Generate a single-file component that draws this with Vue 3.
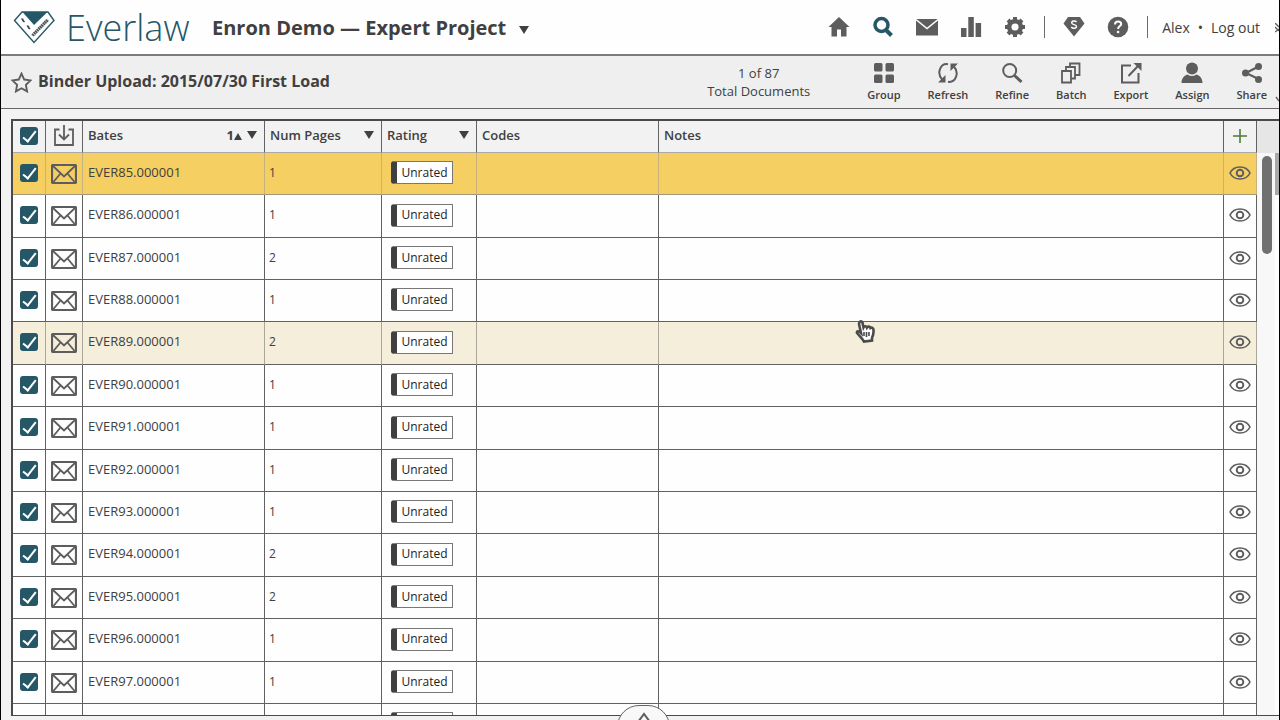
<script setup>
import { ref } from 'vue'

const tools = ['Group', 'Refresh', 'Refine', 'Batch', 'Export', 'Assign', 'Share']
const pages = [1, 1, 2, 1, 2, 1, 1, 1, 1, 2, 2, 1, 1, 1]
const rows = ref(pages.map((count, i) => ({
  bates: `EVER${85 + i}.000001`,
  pages: count,
  checked: true,
  state: i === 0 ? 'current' : i === 4 ? 'hovered' : ''
})))
const allChecked = ref(true)
</script>

<template>
  <div class="app">
    <header class="top">
      <a href="#" class="brand" aria-label="Everlaw home">
        <svg class="logo" viewBox="0 0 42 34" aria-hidden="true">
          <path d="M9 2h26l6 8.500L21 32.500 1.500 10.500z" fill="#fff" stroke="#265767" stroke-width="1.400" />
          <path d="M9.500 2h25L21 15z" fill="#265767" />
          <path d="M8.500 9.500c2-1.500 1 3 3 1.500M14 16.500c2-1.500 1 3 3 1.500" stroke="#3c4448" stroke-width="1.800" fill="none" />
          <path d="M19.500 25.500L35 9.500" stroke="#4b5458" stroke-width="3.200" stroke-dasharray="1.700 .5" fill="none" />
        </svg>
        <span class="wordmark">Everlaw</span>
      </a>
      <button class="project">Enron Demo — Expert Project <span class="caret"></span></button>
      <nav class="nav">
        <a href="#" aria-label="Home"><svg viewBox="0 0 22 22"><path d="M11 1L.5 11H3.500v9.500h5.500v-7h4v7h5.500V11h3z" /></svg></a>
        <a href="#" aria-label="Search" class="active"><svg viewBox="0 0 22 22"><circle cx="9.500" cy="9" r="6.500" fill="none" stroke="currentColor" stroke-width="3.500" /><path d="M14 14l5.500 5.500" stroke="currentColor" stroke-width="4" /></svg></a>
        <a href="#" aria-label="Messages"><svg viewBox="0 0 22 22"><path d="M0 3h22v16.500H0z" /><path d="M0 3.500l11 9 11-9" fill="none" stroke="#fff" stroke-width="1.500" /></svg></a>
        <a href="#" aria-label="Analytics"><svg viewBox="0 0 22 22"><path d="M1 12h5.500v9H1zM8.300 1h5.500v20H8.300zM15.600 7h5.500v14h-5.500z" /></svg></a>
        <a href="#" aria-label="Settings"><svg viewBox="0 0 22 22"><circle cx="11" cy="11" r="5.800" fill="none" stroke="currentColor" stroke-width="4.500" /><path d="M11 1v4M11 17v4M1 11h4M17 11h4M4 4l3 3M15 15l3 3M18 4l-3 3M7 15l-3 3" stroke="currentColor" stroke-width="4" /></svg></a>
        <span class="rule"></span>
        <a href="#" aria-label="Storybuilder"><svg viewBox="0 0 22 22"><path d="M5 1h12l4.500 6.500L11 20.500.5 7.500z" /><path d="M13.500 6C12.500 4.500 8.500 4.500 8.700 7c.2 2 4.800 1.300 4.800 3.500 0 2.300-4 2.300-5.200.5" fill="none" stroke="#fff" stroke-width="1.400" /></svg></a>
        <a href="#" aria-label="Help"><svg viewBox="0 0 22 22"><circle cx="11" cy="11" r="10.300" /><path d="M8 8.500C8 4.500 14.300 4.800 14.200 8c0 2-3.100 2.300-3.100 5" fill="none" stroke="#fff" stroke-width="2" /><circle cx="11.100" cy="16" r="1.300" fill="#fff" /></svg></a>
        <span class="rule"></span>
      </nav>
      <div class="user"><a href="#">Alex</a><span>•</span><a href="#">Log out</a></div>
      <svg class="sliver" viewBox="0 0 4 10" aria-hidden="true"><path d="M0 0l4 4M0 4l4 4M0 9l4-3" fill="none" stroke="#5d5d5d" stroke-width="1.300" /></svg>
    </header>

    <section class="toolbar">
      <button class="star" aria-label="Favorite"><svg viewBox="0 0 20 20"><path d="M10 1.500l2.600 5.700 6 .8-4.400 4.300 1.100 6.200L10 15.500l-5.300 3 1.100-6.200L1.400 8l6-.8z" fill="none" stroke="currentColor" stroke-width="1.800" /></svg></button>
      <h1>Binder Upload: 2015/07/30 First Load</h1>
      <p class="count">1 of 87<br>Total Documents</p>
      <div class="tools">
        <button v-for="tool in tools" :key="tool">
          <svg viewBox="0 0 22 22" aria-hidden="true">
            <g v-if="tool === 'Group'"><rect x="1" y="1" width="8.500" height="8.500" rx="1.500" /><rect x="12.500" y="1" width="8.500" height="8.500" rx="1.500" /><rect x="1" y="12.500" width="8.500" height="8.500" rx="1.500" /><rect x="12.500" y="12.500" width="8.500" height="8.500" rx="1.500" /></g>
            <g v-else-if="tool === 'Refresh'"><path d="M11 2.200C3.500 1 -1 11 5.500 18M11 19.800C18.500 21 23 11 16.500 4" fill="none" stroke="currentColor" stroke-width="2" /><path d="M1 20.500h7.500V13zM21 1.500h-7.500V9z" /></g>
            <g v-else-if="tool === 'Refine'"><circle cx="8.700" cy="8.500" r="6.500" fill="none" stroke="currentColor" stroke-width="2" /><path d="M13.500 13.500l7 6.500" stroke="currentColor" stroke-width="3" /></g>
            <g v-else-if="tool === 'Batch'" fill="none" stroke="currentColor" stroke-width="1.800"><path d="M2 9h9v11.500H2zM6 9V5h9v11.500h-4M10 5V1.500h9.500V13H15" /></g>
            <g v-else-if="tool === 'Export'" fill="none" stroke="currentColor" stroke-width="2"><path d="M11 3.500H2v17h16.500V11M8.500 14L18.500 3.500" /><path d="M13.500 1H21.500v8z" fill="currentColor" stroke="none" /></g>
            <g v-else-if="tool === 'Assign'"><circle cx="11" cy="6.500" r="6" /><path d="M.5 21c0-5 3-7.500 6-8.500 3 2 6 2 9 0 3 1 6 3.500 6 8.500z" /></g>
            <g v-else><path d="M17.500 4.500L5 11l12.500 6" fill="none" stroke="currentColor" stroke-width="2.200" /><circle cx="17.500" cy="4.500" r="3.500" /><circle cx="4.500" cy="11" r="3.500" /><circle cx="17.500" cy="17.500" r="3.500" /></g>
          </svg>
          <span>{{ tool }}</span>
        </button>
      </div>
      <svg class="sliver low" viewBox="0 0 4 10" aria-hidden="true"><path d="M1 5l3 4" fill="none" stroke="#5d5d5d" stroke-width="1.300" /></svg>
    </section>

    <main class="content">
      <div class="grid">
        <table>
          <colgroup>
            <col class="c-check"><col class="c-type"><col class="c-bates"><col class="c-pages"><col class="c-rating"><col class="c-codes"><col><col class="c-view">
          </colgroup>
          <thead>
            <tr>
              <th class="icon-cell"><input v-model="allChecked" type="checkbox" aria-label="Select all"></th>
              <th class="icon-cell"><svg class="download" viewBox="0 0 22 22"><path d="M6.500 4.500H2v15.500h18V4.500h-4.500M11 0v14M6 9.500l5 5 5-5" fill="none" stroke="currentColor" stroke-width="1.800" /></svg></th>
              <th><div class="head">Bates <button class="order" aria-label="Sort order">1<i class="up"></i></button><button class="menu" aria-label="Bates menu"><i class="caret"></i></button></div></th>
              <th><div class="head">Num Pages <button class="menu" aria-label="Num Pages menu"><i class="caret"></i></button></div></th>
              <th><div class="head">Rating <button class="menu" aria-label="Rating menu"><i class="caret"></i></button></div></th>
              <th>Codes</th>
              <th>Notes</th>
              <th class="icon-cell"><button class="add" aria-label="Add column"><svg viewBox="0 0 14 14"><path d="M7 0v14M0 7h14" stroke="#4d7a35" stroke-width="1.600" /></svg></button></th>
            </tr>
          </thead>
          <tbody>
            <tr v-for="row in rows" :key="row.bates" :class="row.state">
              <td class="icon-cell raised"><input v-model="row.checked" type="checkbox" :aria-label="`Select ${row.bates}`"></td>
              <td class="icon-cell"><svg class="mail" viewBox="0 0 26 20"><rect x="1" y="1" width="24" height="18" rx="1" fill="none" stroke="currentColor" stroke-width="2.200" /><path d="M2 2l11 10.500L24 2M2 18.500l7.500-9M24 18.500l-7.500-9" fill="none" stroke="currentColor" stroke-width="1.800" /></svg></td>
              <td class="bates">{{ row.bates }}</td>
              <td class="pages">{{ row.pages }}</td>
              <td><button class="rating">Unrated</button></td>
              <td></td>
              <td></td>
              <td class="icon-cell raised"><button class="view" :aria-label="`View ${row.bates}`"><svg viewBox="0 0 22 14"><path d="M1 7c4-8 16-8 20 0-4 8-16 8-20 0z" fill="none" stroke="currentColor" stroke-width="1.600" /><circle cx="11" cy="7" r="3.300" fill="none" stroke="currentColor" stroke-width="1.900" /></svg></button></td>
            </tr>
          </tbody>
        </table>
      </div>
      <div class="gutter"><div class="thumb"></div></div>
      <div class="edge"></div>
      <button class="pull" aria-label="Open panel"><svg viewBox="0 0 14 12"><path d="M1 11l6-8 6 8" fill="none" stroke="currentColor" stroke-width="2" /></svg></button>
      <svg class="pointer" viewBox="0 0 20 24" aria-hidden="true"><path d="M4.500 2c2-1.500 3 0 3 1l1 4.500c1-2 3-1.500 3.500 0 1-1.500 3-1 3.500.5 1.500-1 3 .5 3 2 .3 4-.5 6-1.500 8v2.500l-8 1C7 18 4 15.500 2 13c-.5-2 1.500-2.500 4 0L4 4z" fill="#fff" stroke="#4b4b4b" stroke-width="2.600" /><path d="M9 12v4M11.500 12v5M14 12v4" stroke="#4b4b4b" stroke-width="1.600" /></svg>
    </main>
  </div>
</template>

<style>
html, body { margin: 0; background: #f2f2f2; }
</style>

<style scoped>
.app { box-sizing: border-box; height: 100vh; display: flex; flex-direction: column; overflow: hidden; border: solid #000; border-width: 0 1px; background: #f2f2f2; color: #404040; font-family: "Open Sans", "Noto Sans", sans-serif; font-size: 12px; }
button { padding: 0; border: 0; background: none; color: inherit; font: inherit; }
a { color: inherit; text-decoration: none; }
svg { display: block; fill: currentColor; }
.caret { display: inline-block; border: 5px solid transparent; border-top: 8px solid #404040; border-bottom: 0; }

.top { position: relative; flex: none; height: 54px; display: flex; align-items: center; background: #fefefe; border-bottom: 2px solid #7c7c7c; padding: 0 18px 0 12px; }
.brand { display: flex; align-items: center; gap: 11px; color: #265767; width: 199px; }
.logo { width: 42px; height: 34px; }
.wordmark { padding-top: 2px; font-size: 36px; font-weight: 300; line-height: 48px; }
.project { font-size: 20px; font-weight: 700; white-space: nowrap; }
.project .caret { margin-left: 8px; vertical-align: 1px; }
.nav { margin-left: auto; display: flex; align-items: center; gap: 22px; color: #5d5d5d; }
.nav svg { width: 22px; height: 22px; }
.nav .active { color: #265767; }
.rule { width: 1px; height: 22px; margin: 0 -4px; background: #6b6b6b; }
.user { display: flex; gap: 8px; margin-left: 18px; padding-right: 1px; font-size: 14px; white-space: nowrap; }
.sliver { position: absolute; right: 0; top: 23px; width: 4px; height: 10px; }
.low { top: 36px; }

.toolbar { position: relative; flex: none; height: 52px; display: flex; align-items: center; background: #efefef; border-bottom: 1px solid #666; padding: 0 12px 0 10px; }
.star { width: 21px; color: #5d5d5d; }
.star svg { width: 21px; height: 21px; }
h1 { margin: 0 0 2px 6px; font-size: 16px; font-weight: 700; white-space: nowrap; }
.count { margin: 0 57px 0 auto; text-align: center; font-size: 13px; line-height: 18px; }
.tools { display: flex; gap: 27px; }
.tools button { display: flex; flex-direction: column; align-items: center; gap: 3px; font-size: 11px; line-height: 16px; font-weight: 600; }
.tools svg { width: 22px; height: 22px; color: #5d5d5d; }

.content { position: relative; flex: 1; min-height: 0; display: flex; padding: 10px 0 4px 10px; }
.grid { flex: 1; min-width: 0; overflow: hidden; border: solid #4a4a4a; border-width: 2px 0 1px 2px; background: #fefefe; }
table { width: 100%; table-layout: fixed; border-collapse: separate; border-spacing: 0; }
.c-check, .c-view { width: 33px; }
.c-type { width: 37px; }
.c-bates, .c-codes { width: 182px; }
.c-pages { width: 117px; }
.c-rating { width: 95px; }
th, td { box-sizing: border-box; padding: 0 0 2px 5px; border: solid #626262; border-width: 0 1px 1px 0; text-align: left; font-size: 12px; line-height: 16px; vertical-align: middle; }
th { height: 32px; background: #f2f2f2; padding: 0 0 4px 5px; font-size: 13px; font-weight: 600; border-bottom-color: #aaa; }
td { height: 42px; }
tbody tr:nth-child(5n) td, tbody tr:nth-child(5n + 2) td { height: 43px; }
td.bates { font-size: 13px; padding-bottom: 4px; }
td.pages { padding-left: 4px; }
.icon-cell { padding: 0; }
th.icon-cell, td.raised { padding: 0 0 2px; }
.icon-cell > * { display: block; margin: 0 auto; }
.current td { background: #f6cf62; border-color: #c5b27c; border-bottom-color: #a3987a; }
.current .bates { font-weight: 500; }
.hovered td { background: #f4eeda; border-right-color: #aaa69a; }
.head { display: flex; align-items: center; }
.menu { margin: 0 7px 0 auto; line-height: 8px; }
.menu .caret { display: block; }
.order { display: flex; align-items: center; margin-left: auto; font-weight: 700; }
.order + .menu { margin-left: 5px; }
.up { margin-top: 4px; border: 4px solid transparent; border-bottom: 7px solid #404040; border-top: 0; }
input { appearance: none; width: 18px; height: 18px; border-radius: 3px; background: #fff; }
input:checked { background: #265767; }
input:checked::before { content: ""; display: block; width: 5px; height: 12px; margin: auto; border: solid #fff; border-width: 0 2px 2px 0; transform: translateY(1px) rotate(38deg); }
.download { width: 22px; height: 22px; color: #5d5d5d; }
.mail { width: 26px; height: 20px; color: #5d5d5d; }
.add svg { width: 14px; height: 14px; }
.view svg { width: 22px; height: 14px; color: #5d5d5d; }
.rating { display: block; box-sizing: border-box; margin-left: 4px; width: 62px; height: 23px; border: 1px solid #777; border-left: 6px solid #404040; border-radius: 3px 0 0 3px; background: #fff; color: #222; }
.gutter { flex: none; width: 18px; background: #f8f8f8; border-top: 2px solid #4a4a4a; border-bottom: 1px solid #4a4a4a; }
.gutter::before { content: ""; display: block; height: 32px; background: #e6e6e6; }
.thumb { width: 10px; height: 98px; margin: 3px 0 0 5px; border-radius: 5px; background: #707070; }
.edge { flex: none; width: 4px; background: #fefefe; border-top: 2px solid #4a4a4a; border-bottom: 1px solid #4a4a4a; }
.edge::before { content: ""; display: block; height: 32px; background: #e6e6e6; }
.edge::after { content: ""; display: block; height: 42px; background: #a9a9a9; }
.pull { position: absolute; left: 50%; bottom: -12px; margin-left: -23px; width: 53px; height: 27px; box-sizing: border-box; border: 1px solid #626262; border-radius: 22px 22px 0 0; background: #f8f8f8; color: #5d5d5d; }
.pull svg { width: 14px; height: 12px; margin: 0 auto 4px; }
.pointer { position: absolute; left: 854px; top: 211px; width: 20px; height: 24px; }
</style>
